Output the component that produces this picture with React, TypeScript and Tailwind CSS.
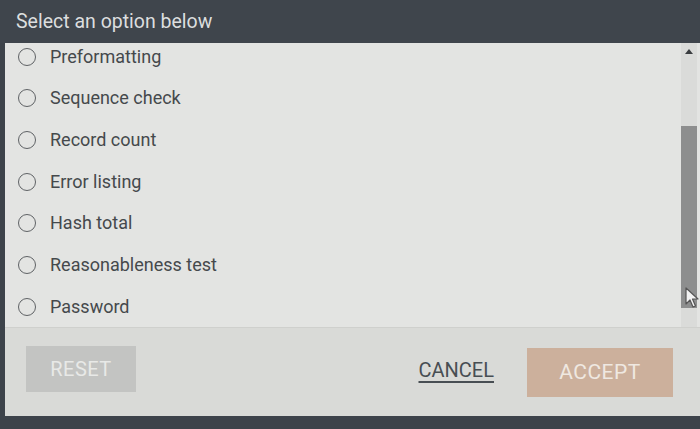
import React from "react";

const options = [
  "Preformatting",
  "Sequence check",
  "Record count",
  "Error listing",
  "Hash total",
  "Reasonableness test",
  "Password",
];

export default function App() {
  return (
    <div
      className="w-[700px] h-[429px] bg-[#3d434a] flex flex-col overflow-hidden relative"
      style={{ fontFamily: "Roboto, 'Liberation Sans', sans-serif" }}
    >
      <div className="h-[43px] shrink-0 pl-[16px] pt-[9px] text-[19.5px] leading-[26px] text-[#dcdedf] bg-[#3f454c]">
        Select an option below
      </div>
      <div className="flex-1 ml-[5px] flex flex-col min-h-0">
        <div className="h-[284px] shrink-0 bg-[#e3e4e2] flex relative">
          <div className="flex-1 overflow-hidden">
            <div className="-mt-[7px] flex flex-col">
              {options.map((o) => (
                <div key={o} className="h-[41.67px] shrink-0 flex items-center pl-[13px]">
                  <span className="w-[18px] h-[18px] rounded-full border-[1.5px] border-[#5f6265] shrink-0" />
                  <span className="ml-[14px] text-[18px] text-[#45494c] leading-none">{o}</span>
                </div>
              ))}
            </div>
          </div>
          <div className="w-[16px] mr-[3px] flex flex-col items-center bg-[#dadbd9]">
            <svg width="8" height="6" viewBox="0 0 8 6" className="mt-[6px]">
              <polygon points="4,0 8,5 0,5" fill="#3a3d40" />
            </svg>
            <div className="mt-[71px] w-full h-[182px] bg-[#8d8e8e]" />
          </div>
          <svg
            width="14"
            height="22"
            viewBox="0 0 14 22"
            className="absolute left-[680px] top-[244px]"
          >
            <path
              d="M1 1 L1 17 L5 13 L8 20 L10.5 19 L7.5 12 L13 12 Z"
              fill="#f2f2f2"
              stroke="#555"
              strokeWidth="1.2"
              strokeLinejoin="round"
            />
          </svg>
        </div>
        <div className="h-[89px] shrink-0 bg-[#d9dad7] border-t border-[#cfd0cd] flex items-start">
          <button className="mt-[18px] ml-[21px] w-[110px] h-[46px] bg-[#c3c4c2] text-[#e8e9e7] text-[20px] tracking-[0.5px]">
            RESET
          </button>
          <div className="flex-1" />
          <button className="mt-[30px] text-[20px] leading-[24px] text-[#484e53] underline underline-offset-[4px] decoration-[2px]">
            CANCEL
          </button>
          <button className="mt-[20px] ml-[33px] mr-[27px] w-[146px] h-[49px] bg-[#ccb09c] text-[#efe8e1] text-[21px] tracking-[0.5px]">
            ACCEPT
          </button>
        </div>
      </div>
      <div className="h-[13px] shrink-0" />
    </div>
  );
}
